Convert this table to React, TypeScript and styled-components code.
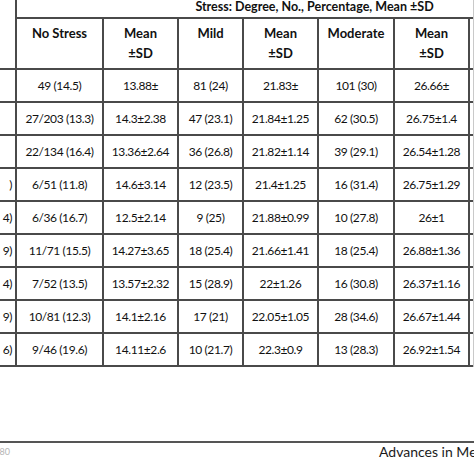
import React from "react";
import styled, { createGlobalStyle } from "styled-components";

const GlobalStyle = createGlobalStyle`
	html, body {
		margin: 0;
		padding: 0;
		background: #fff;
	}
	body {
		width: 474px;
		height: 474px;
		overflow: hidden;
		font-family: Lato, "Liberation Sans", sans-serif;
		color: #161616;
	}
`;

const LINE = "#4a4a4a";

// widths picked so the grid lines fall where they do in the scan
const COLS = [16, 87, 75, 65, 75, 76, 75, 76, 65];

const ROWS = [
	["", "49 (14.5)", "13.88±", "81 (24)", "21.83±", "101 (30)", "26.66±"],
	["", "27/203 (13.3)", "14.3±2.38", "47 (23.1)", "21.84±1.25", "62 (30.5)", "26.75±1.4"],
	["", "22/134 (16.4)", "13.36±2.64", "36 (26.8)", "21.82±1.14", "39 (29.1)", "26.54±1.28"],
	[")", "6/51 (11.8)", "14.6±3.14", "12 (23.5)", "21.4±1.25", "16 (31.4)", "26.75±1.29"],
	["4)", "6/36 (16.7)", "12.5±2.14", "9 (25)", "21.88±0.99", "10 (27.8)", "26±1"],
	["9)", "11/71 (15.5)", "14.27±3.65", "18 (25.4)", "21.66±1.41", "18 (25.4)", "26.88±1.36"],
	["4)", "7/52 (13.5)", "13.57±2.32", "15 (28.9)", "22±1.26", "16 (30.8)", "26.37±1.16"],
	["9)", "10/81 (12.3)", "14.1±2.16", "17 (21)", "22.05±1.05", "28 (34.6)", "26.67±1.44"],
	["6)", "9/46 (19.6)", "14.11±2.6", "10 (21.7)", "22.3±0.9", "13 (28.3)", "26.92±1.54"],
];

const HEADS: [string, string?][] = [
	["No Stress"],
	["Mean", "±SD"],
	["Mild"],
	["Mean", "±SD"],
	["Moderate"],
	["Mean", "±SD"],
];

// two more columns sit past the right edge of the crop
const HIDDEN = 2;

export default function App() {
	return (
		<Page>
			<GlobalStyle />
			<Clip>
				<Table>
					<colgroup>
						{COLS.map((w, i) => (
							<col key={i} style={{ width: w }} />
						))}
					</colgroup>
					<thead>
						<tr>
							<StubHead rowSpan={2} />
							<TitleCell colSpan={8}>Stress: Degree, No., Percentage, Mean ±SD</TitleCell>
						</tr>
						<tr>
							{HEADS.map(([a, b], i) => (
								<HeadCell key={i}>
									{a}
									{b && <br />}
									{b}
								</HeadCell>
							))}
							{Array.from({ length: HIDDEN }).map((_, i) => (
								<HeadCell key={"h" + i} />
							))}
						</tr>
					</thead>
					<tbody>
						{ROWS.map((row, r) => (
							<tr key={r}>
								<StubCell>
									<StubText>{row[0]}</StubText>
								</StubCell>
								{row.slice(1).map((v, c) => (
									<Cell key={c}>{v}</Cell>
								))}
								{Array.from({ length: HIDDEN }).map((_, i) => (
									<Cell key={"h" + i} />
								))}
							</tr>
						))}
					</tbody>
				</Table>
			</Clip>
			<Footer>
				<PageNo>
					<span>80</span>
				</PageNo>
				<span />
				<Journal>Advances in Me</Journal>
			</Footer>
		</Page>
	);
}

const Page = styled.div`
	width: 474px;
	height: 474px;
	display: flex;
	flex-direction: column;
	overflow: hidden;
`;

const Clip = styled.div`
	width: 473px;
	overflow: hidden;
	border-right: 1px solid #c9c9c9;
`;

const Table = styled.table`
	width: 610px;
	table-layout: fixed;
	border-collapse: collapse;
	font-size: 12px;
	letter-spacing: -0.4px;
	color: #111;
`;

const BaseCell = styled.td`
	border: 2px solid ${LINE};
	padding: 0;
	text-align: center;
	white-space: nowrap;
	overflow: hidden;
`;

const StubHead = styled(BaseCell).attrs({ as: "th" })`
	border-top: none;
	border-left: none;
`;

const TitleCell = styled(BaseCell).attrs({ as: "th" })`
	border-top: none;
	border-right: none;
	height: 16px;
	vertical-align: top;
	padding-top: 1px;
	line-height: 12px;
	font-size: 12.5px;
	font-weight: 700;
	letter-spacing: 0;
	padding-left: 2px;
`;

const HeadCell = styled(BaseCell).attrs({ as: "th" })`
	height: 51px;
	vertical-align: top;
	padding-top: 4px;
	line-height: 20px;
	font-size: 13px;
	font-weight: 700;
	letter-spacing: 0;
	box-sizing: border-box;
`;

const Cell = styled(BaseCell)`
	height: 31px;
	vertical-align: middle;
`;

const StubCell = styled(Cell)`
	border-left: none;
`;

const StubText = styled.div`
	display: flex;
	justify-content: flex-end;
	padding-right: 3px;
`;

const Footer = styled.div`
	margin-top: 74px;
	border-top: 2px solid #555;
	display: grid;
	grid-template-columns: 10px 369px 1fr;
	align-items: start;
	white-space: nowrap;
`;

const PageNo = styled.div`
	display: flex;
	justify-content: flex-end;
	padding-top: 3px;
	font-size: 9px;
	color: #b5b5b5;
`;

const Journal = styled.span`
	font-size: 14px;
	color: #1a1a1a;
`;
